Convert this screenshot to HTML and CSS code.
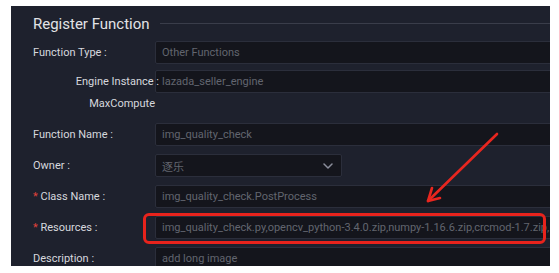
FILE: index.html
```html
<!DOCTYPE html>
<html>
<head>
<meta charset="utf-8">
<link rel="stylesheet" href="styles.css">
</head>
<body>
<div class="page">
  <div class="panel">
    <div class="heading">
      <span class="title">Register Function</span>
      <span class="rule"></span>
    </div>
    <div class="form">
      <div class="row">
        <div class="label">Function Type :</div>
        <div class="input">Other Functions</div>
      </div>
      <div class="row row-engine">
        <div class="label label-right">Engine Instance :</div>
        <div class="input input-engine">lazada_seller_engine</div>
      </div>
      <div class="row row-sub">
        <div class="label label-sub">MaxCompute</div>
      </div>
      <div class="row">
        <div class="label">Function Name :</div>
        <div class="input">img_quality_check</div>
      </div>
      <div class="row">
        <div class="label">Owner :</div>
        <div class="input select">
          <span>逐乐</span>
          <svg class="chev" width="10" height="6" viewBox="0 0 10 6"><path d="M1 1 L5 5 L9 1" fill="none" stroke="#8b8e9b" stroke-width="1.5" stroke-linecap="round" stroke-linejoin="round"/></svg>
        </div>
      </div>
      <div class="row">
        <div class="label"><span class="req">*</span> Class Name :</div>
        <div class="input">img_quality_check.PostProcess</div>
      </div>
      <div class="row">
        <div class="label"><span class="req">*</span> Resources :</div>
        <div class="input">img_quality_check.py,opencv_python-3.4.0.zip,numpy-1.16.6.zip,crcmod-1.7.zip,</div>
      </div>
      <div class="row">
        <div class="label">Description :</div>
        <div class="input">add long image</div>
      </div>
    </div>
  </div>
  <div class="highlight"></div>
  <svg class="arrow" width="559" height="273" viewBox="0 0 559 273">
    <g fill="none" stroke="#e8261f" stroke-width="2.6" stroke-linecap="round" stroke-linejoin="round">
      <path d="M497 134 L428 201"/>
      <path d="M432 188 L428 201 L440 198"/>
    </g>
  </svg>
</div>
</body>
</html>
```

FILE: styles.css
```css
* { box-sizing: border-box; }
html, body { margin: 0; padding: 0; background: #ffffff; }
body { font-family: Roboto, "Liberation Sans", Arial, sans-serif; }

.page {
  position: relative;
  width: 559px;
  height: 273px;
  padding: 6px 0 0 11px;
}

.panel {
  width: 539px;
  height: 260px;
  background: #1e212d;
  overflow: hidden;
  padding: 0 0 0 22px;
}

.heading {
  display: flex;
  align-items: center;
  height: 34px;
  padding-top: 1px;
}
.title {
  color: #e2e3e6;
  font-size: 15px;
  white-space: nowrap;
}
.rule {
  flex: 1;
  height: 1px;
  background: #3a3d4a;
  margin-left: 10px;
}

.form {
  display: flex;
  flex-direction: column;
  gap: 8px;
  padding-top: 1px;
}
.row {
  display: flex;
  align-items: center;
  height: 23px;
}
.row-engine { margin-top: -2px; }
.row-sub { height: 20px; margin-top: -8px; margin-bottom: 2px; }

.label {
  width: 122px;
  flex: none;
  color: #d6d8de;
  font-size: 11px;
  white-space: nowrap;
}
.label-right {
  width: 126px;
  margin-right: -4px;
  text-align: right;
  position: relative;
  z-index: 1;
}
.label-sub {
  width: 122px;
  text-align: right;
}
.req { color: #e0413b; }

.input {
  flex: none;
  width: 410px;
  height: 23px;
  display: flex;
  align-items: center;
  padding-left: 6px;
  background: #14151c;
  border: 1px solid #2b2e3b;
  border-radius: 2px;
  color: #62656f;
  font-size: 11px;
  white-space: nowrap;
  overflow: hidden;
}
.input-engine { padding-left: 6px; }
.select {
  width: 187px;
  justify-content: space-between;
  padding-right: 8px;
  font-family: "Noto Sans CJK SC", Roboto, sans-serif;
}
.chev { flex: none; }

.highlight {
  position: absolute;
  left: 143px;
  top: 213px;
  width: 403px;
  height: 31px;
  border: 3px solid #e8231c;
  border-radius: 6px;
}
.arrow {
  position: absolute;
  left: 0;
  top: 0;
}
```
